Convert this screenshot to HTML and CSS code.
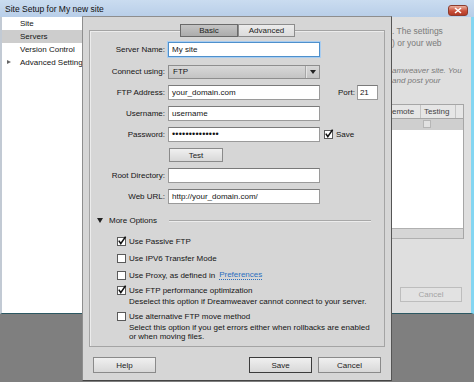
FILE: index.html
```html
<!DOCTYPE html>
<html>
<head>
<meta charset="utf-8">
<title>Site Setup</title>
<link rel="stylesheet" href="styles.css">
</head>
<body>
<div class="bgwin">
  <div class="titlebar">
    <span class="title">Site Setup for My new site</span>
    <span class="close"><svg width="8" height="7" viewBox="0 0 8 7"><path d="M1 1 L7 6 M7 1 L1 6" stroke="#fff" stroke-width="1.6"/></svg></span>
  </div>
  <div class="bgbody">
    <ul class="sidebar">
      <li>Site</li>
      <li class="sel">Servers</li>
      <li>Version Control</li>
      <li class="arrow">Advanced Settings</li>
    </ul>
    <div class="under"></div>
    <div class="rightcol">
      <p class="intro">. The settings<br>) or your web</p>
      <p class="note">amweaver site. You<br>and post your</p>
      <div class="srvtable">
        <div class="thead"><span class="c1">emote</span><span class="c2">Testing</span><span class="c3"></span></div>
        <div class="trow"><span class="c1"></span><span class="c2"><i class="mini"></i></span><span class="c3"></span></div>
        <div class="tbody"></div>
        <div class="tfoot"></div>
      </div>
      <div class="bgcancel">Cancel</div>
    </div>
  </div>
</div>

<div class="dialog">
  <div class="tabs">
    <span class="tab active">Basic</span><span class="tab">Advanced</span>
  </div>
  <div class="frame">
    <div class="row r1">
      <label class="lbl">Server Name:</label>
      <div class="input focus">My site</div>
    </div>
    <div class="row">
      <label class="lbl">Connect using:</label>
      <div class="select"><span class="sv">FTP</span><span class="sarrow"><svg width="6" height="4" viewBox="0 0 6 4"><path d="M0 0 H6 L3 4 Z" fill="#222"/></svg></span></div>
    </div>
    <div class="row">
      <label class="lbl">FTP Address:</label>
      <div class="input">your_domain.com</div>
      <label class="port">Port:</label>
      <div class="input small">21</div>
    </div>
    <div class="row">
      <label class="lbl">Username:</label>
      <div class="input">username</div>
    </div>
    <div class="row">
      <label class="lbl">Password:</label>
      <div class="input dots">••••••••••••••</div>
      <span class="cb checked save"><svg width="10" height="10" viewBox="0 0 10 10"><path d="M1.8 4.6 L3.8 7.6 L8.6 0.6" fill="none" stroke="#111" stroke-width="1.6"/></svg></span><span class="savel">Save</span>
    </div>
    <div class="row r6">
      <span class="lbl"></span>
      <span class="btn test">Test</span>
    </div>
    <div class="row">
      <label class="lbl">Root Directory:</label>
      <div class="input"></div>
    </div>
    <div class="row">
      <label class="lbl">Web URL:</label>
      <div class="input">http://your_domain.com/</div>
    </div>
    <div class="more">
      <svg class="tri" width="6" height="5" viewBox="0 0 6 5"><path d="M0 0 H6 L3 5 Z" fill="#222"/></svg>
      <span class="moretext">More Options</span>
      <span class="rule"></span>
    </div>
    <div class="opts">
      <div class="opt o1"><span class="cb checked"><svg width="10" height="10" viewBox="0 0 10 10"><path d="M1.8 4.6 L3.8 7.6 L8.6 0.6" fill="none" stroke="#111" stroke-width="1.6"/></svg></span>Use Passive FTP</div>
      <div class="opt o2"><span class="cb"></span>Use IPV6 Transfer Mode</div>
      <div class="opt o2"><span class="cb"></span>Use Proxy, as defined in <span class="link">Preferences</span></div>
      <div class="opt o3"><span class="cb checked"><svg width="10" height="10" viewBox="0 0 10 10"><path d="M1.8 4.6 L3.8 7.6 L8.6 0.6" fill="none" stroke="#111" stroke-width="1.6"/></svg></span>Use FTP performance optimization</div>
      <div class="desc d1">Deselect this option if Dreamweaver cannot connect to your server.</div>
      <div class="opt o3"><span class="cb"></span>Use alternative FTP move method</div>
      <div class="desc d2">Select this option if you get errors either when rollbacks are enabled<br>or when moving files.</div>
    </div>
  </div>
  <div class="buttons">
    <span class="btn help">Help</span>
    <span class="spacer"></span>
    <span class="btn default">Save</span>
    <span class="btn">Cancel</span>
  </div>
</div>
</body>
</html>
```

FILE: styles.css
```css
* { box-sizing: border-box; }
html, body { margin: 0; padding: 0; }
body {
  width: 474px;
  height: 382px;
  background: #7f7f7f;
  position: relative;
  overflow: hidden;
  font-family: "Liberation Sans", Arial, sans-serif;
  font-size: 8px;
  color: #141414;
}

/* background window */
.bgwin {
  width: 474px;
  height: 314px;
  display: flex;
  flex-direction: column;
  background: #dfdfdf;
}
.titlebar {
  height: 17px;
  flex: none;
  background: linear-gradient(#cadcf0, #b8cee8);
  display: flex;
  align-items: center;
  justify-content: space-between;
  padding: 0 6px 0 5px;
  font-size: 8.5px;
  color: #111;
}
.close {
  width: 20px;
  height: 11px;
  margin-top: 3px;
  border: 1px solid #8c3c2e;
  border-radius: 3px;
  background: linear-gradient(#eab0a0, #c9503a 55%, #b23a26);
  display: flex;
  align-items: center;
  justify-content: center;
}
.bgbody {
  flex: 1;
  display: flex;
  border-left: 2px solid #c2cad4;
  border-right: 3px solid #84d6f2;
  border-bottom: 1px solid #2c5862;
}
.sidebar {
  width: 80px;
  flex: none;
  margin: 0;
  padding: 0;
  list-style: none;
  background: #fff;
}
.sidebar li {
  height: 13px;
  line-height: 13px;
  padding-left: 18px;
  white-space: nowrap;
  position: relative;
}
.sidebar li.sel { background: #cdcdcd; }
.sidebar li.arrow::before {
  content: "";
  position: absolute;
  left: 5px;
  top: 4px;
  border-left: 4px solid #666;
  border-top: 2.5px solid transparent;
  border-bottom: 2.5px solid transparent;
}
.under { width: 310px; flex: none; }
.rightcol {
  width: 79px;
  flex: none;
  padding-top: 8px;
  overflow: hidden;
  color: #7a7a7a;
  white-space: nowrap;
}
.intro { margin: 0; line-height: 12px; font-size: 8.5px; }
.note { margin: 17px 0 0; line-height: 10px; font-style: italic; }
.srvtable { margin-top: 18px; width: 72px; border-right: 1px solid #a6a6a6; }
.thead, .trow { display: flex; }
.thead {
  height: 15px;
  line-height: 14px;
  border-top: 1px solid #a6a6a6;
  border-bottom: 1px solid #a6a6a6;
  background: #e6e6e6;
  color: #444;
}
.c1 { width: 28px; }
.c2 { width: 35px; padding-left: 3px; border-left: 1px solid #c4c4c4; }
.c3 { flex: 1; border-left: 1px solid #c4c4c4; }
.trow .c2, .trow .c3 { border-left: none; }
.trow { height: 11px; background: #cfcfcf; }
.mini {
  display: block;
  width: 8px;
  height: 8px;
  margin: 1px 0 0 0;
  border: 1px solid #b6b6b6;
  background: #e2e2e2;
}
.tbody { height: 98px; background: #fff; }
.tfoot { height: 11px; background: #d6d6d6; border-top: 1px solid #b0b0b0; border-bottom: 1px solid #b0b0b0; }
.bgcancel {
  margin: 48px 0 0 8px;
  width: 62px;
  height: 15px;
  line-height: 13px;
  text-align: center;
  border: 1px solid #bdbdbd;
  background: #e2e2e2;
  color: #a4a4a4;
}

/* front dialog */
.dialog {
  position: absolute;
  left: 82px;
  top: 16px;
  width: 310px;
  height: 365px;
  background: #d6d6d6;
  border: 1px solid #8e8e8e;
  border-right-color: #555;
  border-bottom-color: #444;
  padding: 7px 6px 0;
  display: flex;
  flex-direction: column;
}
.tabs {
  display: flex;
  justify-content: center;
  position: relative;
  z-index: 1;
  height: 13px;
  padding-left: 1px;
}
.tab {
  height: 13px;
  line-height: 11px;
  text-align: center;
  border: 1px solid #8c8c8c;
  background: linear-gradient(#ececec, #dcdcdc);
  width: 57px;
  color: #222;
}
.tab.active {
  width: 58px;
  border-color: #6a6a6a;
  background: linear-gradient(#c4c4c4, #acacac);
}
.frame {
  margin-top: -7px;
  height: 317px;
  border: 1px solid #a4a4a4;
  box-shadow: inset 1px 1px 0 #ececec;
  padding: 7px 13px 0 0;
  flex: none;
}
.row {
  display: flex;
  align-items: center;
  height: 21px;
}
.row.r1 { height: 23px; }
.row.r6 { height: 20px; }
.lbl {
  width: 75px;
  text-align: right;
  margin-right: 3px;
  flex: none;
  white-space: nowrap;
}
.input {
  width: 152px;
  height: 15px;
  background: #fff;
  border: 1px solid #9a9a9a;
  border-top-color: #7a7a7a;
  padding-left: 3px;
  line-height: 13px;
  white-space: nowrap;
  overflow: hidden;
  flex: none;
}
.input.focus {
  border: 1px solid #4e90cc;
  box-shadow: 0 0 0 1px #a9cdf0;
}
.input.small { width: 21px; padding-left: 2px; }
.input.dots { font-size: 9px; letter-spacing: 0.2px; line-height: 13px; }
.port { margin-left: 18px; margin-right: 2px; }
.select {
  width: 152px;
  height: 14px;
  border: 1px solid #8e8e8e;
  background: linear-gradient(#d8d8d8, #c4c4c4);
  display: flex;
  align-items: center;
  flex: none;
}
.sv { flex: 1; padding-left: 4px; }
.sarrow {
  width: 14px;
  height: 12px;
  border-left: 1px solid #a6a6a6;
  box-shadow: inset 1px 0 0 #e4e4e4;
  display: flex;
  align-items: center;
  justify-content: center;
}
.cb {
  width: 9px;
  height: 9px;
  border: 1px solid #5a5a5a;
  background: #fff;
  flex: none;
  display: inline-block;
  position: relative;
  margin-right: 3px;
}
.cb svg { position: absolute; left: -1px; top: -2px; }
.cb.save { margin-left: 4px; }
.savel { margin-left: 0; }
.btn {
  display: inline-flex;
  align-items: center;
  justify-content: center;
  height: 14px;
  border: 1px solid #8a8a8a;
  background: linear-gradient(#f0f0f0, #d8d8d8);
  color: #222;
}
.btn.test { width: 54px; height: 14px; margin-left: 1px; }

.more {
  margin-top: 7px;
  height: 13px;
  display: flex;
  align-items: center;
  padding-left: 7px;
}
.tri { margin-right: 6px; flex: none; }
.moretext { white-space: nowrap; }
.rule {
  flex: 1;
  height: 2px;
  margin-left: 12px;
  border-top: 1px solid #a8a8a8;
  border-bottom: 1px solid #ececec;
}
.opts { padding-left: 27px; white-space: nowrap; }
.opt {
  height: 12px;
  display: flex;
  align-items: center;
}
.opt.o1 { margin-top: 8px; }
.opt.o2 { margin-top: 5px; }
.opt.o3 { margin-top: 3px; }
.link {
  color: #2b6fc0;
  border-bottom: 1px dotted #2b6fc0;
  line-height: 9px;
  margin-left: 4px;
}
.desc { padding-left: 12px; }
.desc.d1 { line-height: 11px; }
.desc.d2 { line-height: 9px; margin-top: 1px; }

.buttons {
  display: flex;
  margin-top: 10px;
  padding: 0 4px;
  gap: 6px;
}
.buttons .btn { width: 63px; height: 16px; }
.buttons .btn.help { margin-left: 0; }
.spacer { flex: 1; }
.btn.default { border: 1px solid #3c3c3c; }
```
